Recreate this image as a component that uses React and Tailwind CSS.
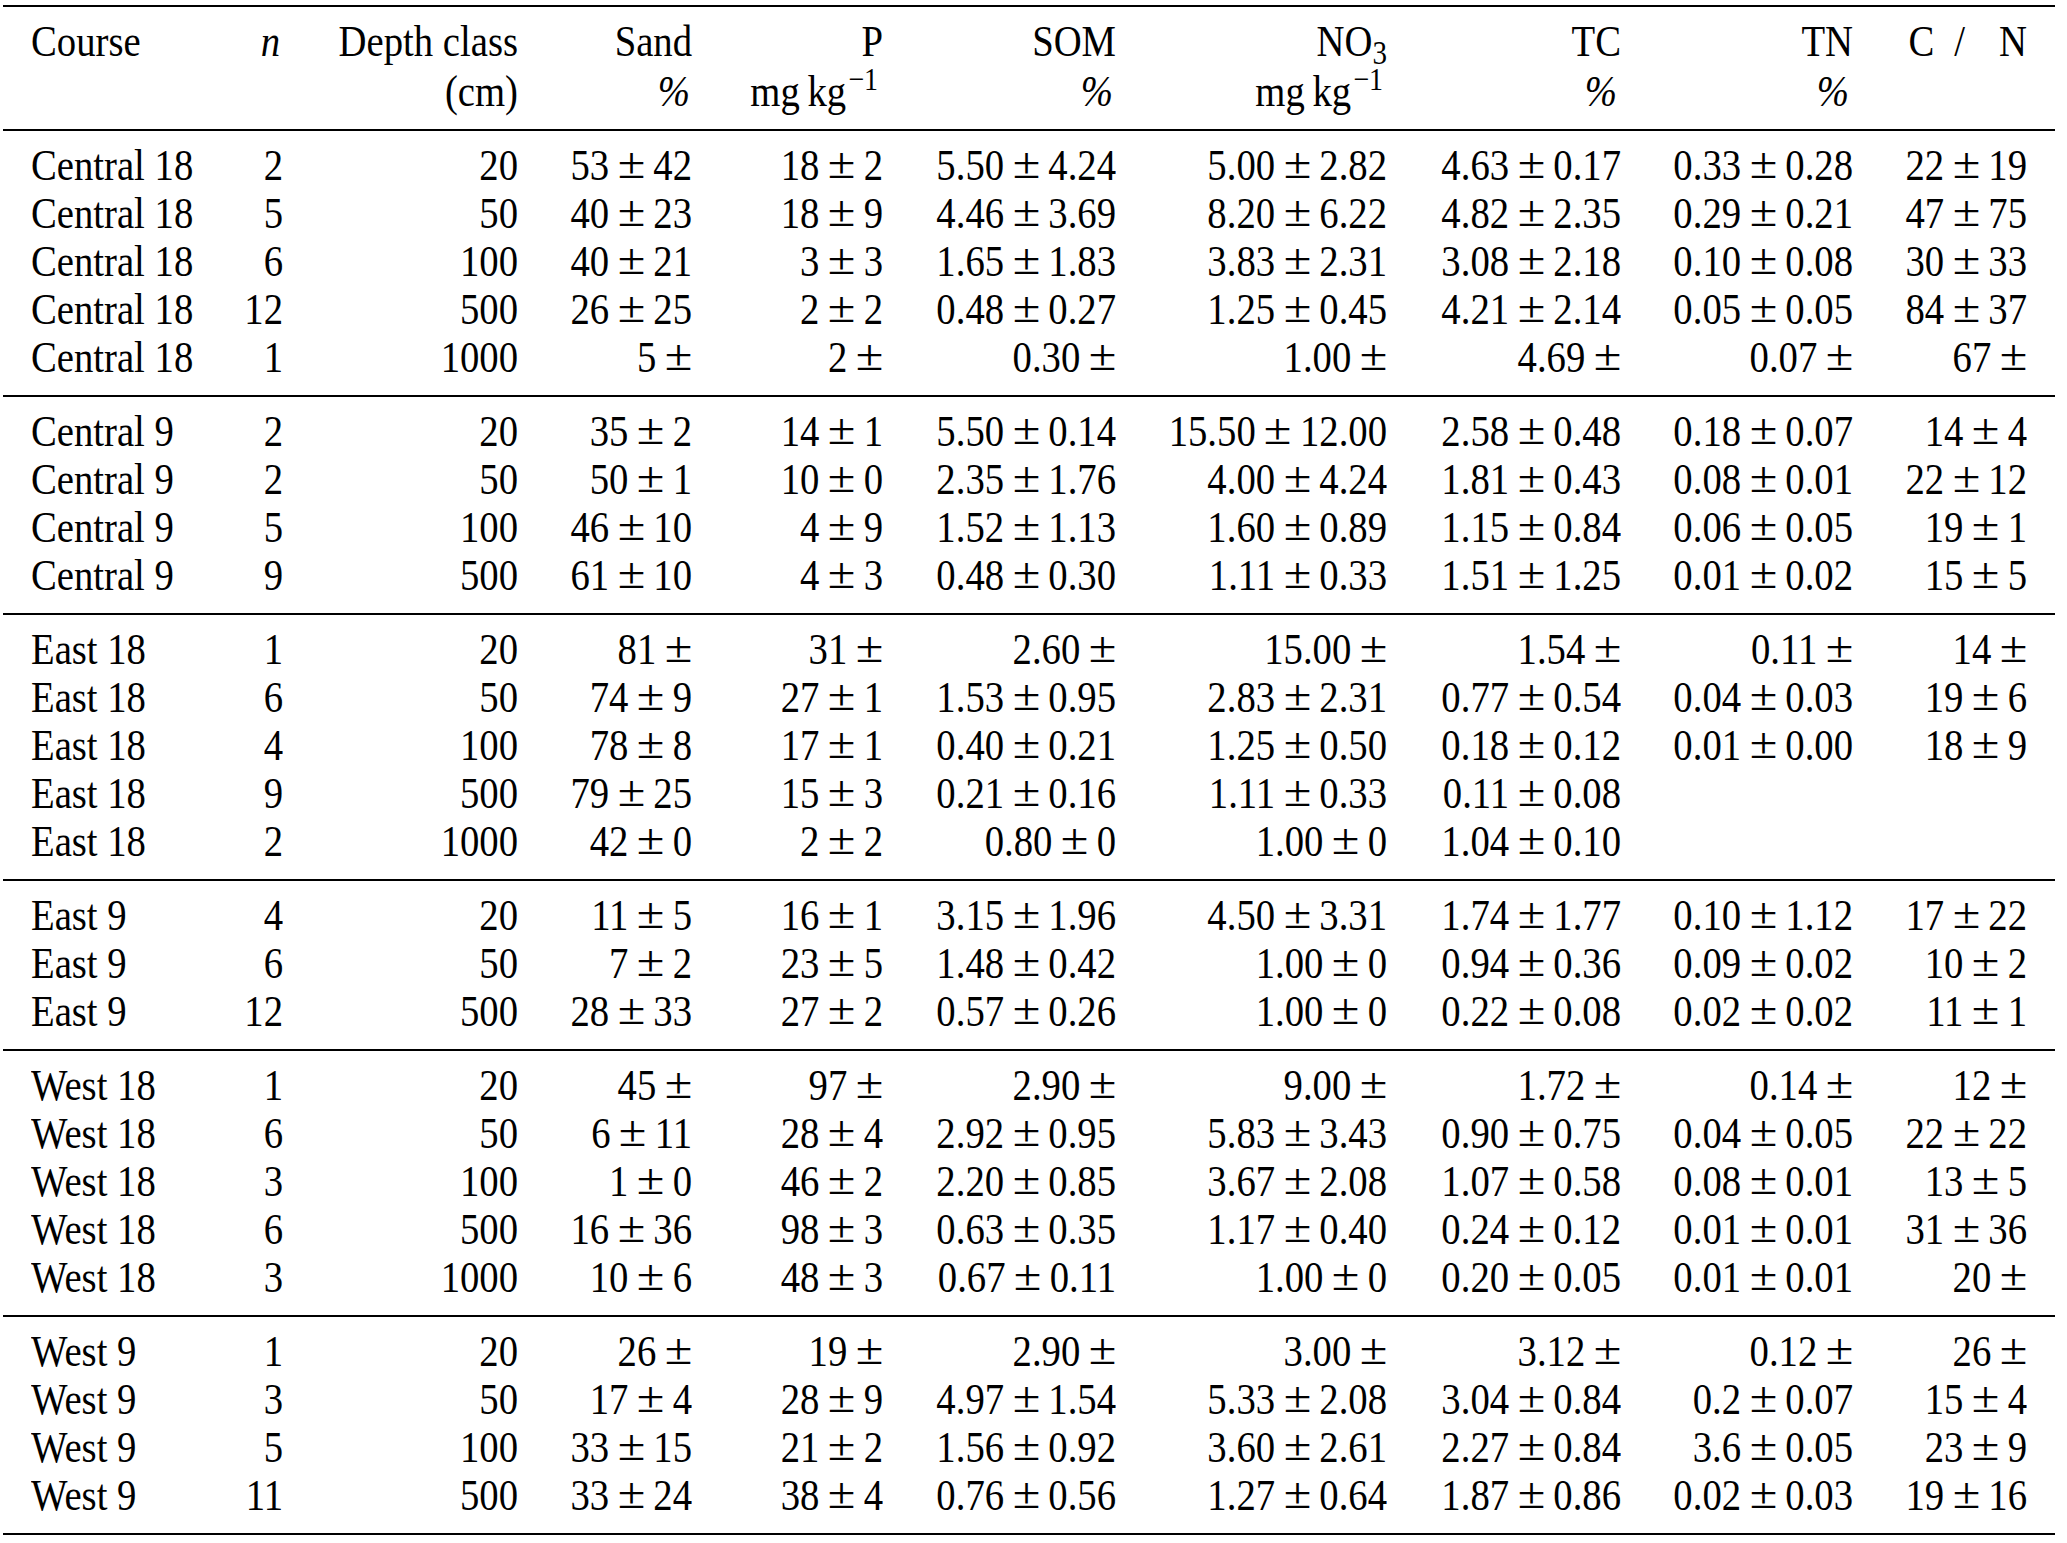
const groups = [
  [
    ['Central 18', '2', '20', '53 ± 42', '18 ± 2', '5.50 ± 4.24', '5.00 ± 2.82', '4.63 ± 0.17', '0.33 ± 0.28', '22 ± 19'],
    ['Central 18', '5', '50', '40 ± 23', '18 ± 9', '4.46 ± 3.69', '8.20 ± 6.22', '4.82 ± 2.35', '0.29 ± 0.21', '47 ± 75'],
    ['Central 18', '6', '100', '40 ± 21', '3 ± 3', '1.65 ± 1.83', '3.83 ± 2.31', '3.08 ± 2.18', '0.10 ± 0.08', '30 ± 33'],
    ['Central 18', '12', '500', '26 ± 25', '2 ± 2', '0.48 ± 0.27', '1.25 ± 0.45', '4.21 ± 2.14', '0.05 ± 0.05', '84 ± 37'],
    ['Central 18', '1', '1000', '5 ±', '2 ±', '0.30 ±', '1.00 ±', '4.69 ±', '0.07 ±', '67 ±'],
  ],
  [
    ['Central 9', '2', '20', '35 ± 2', '14 ± 1', '5.50 ± 0.14', '15.50 ± 12.00', '2.58 ± 0.48', '0.18 ± 0.07', '14 ± 4'],
    ['Central 9', '2', '50', '50 ± 1', '10 ± 0', '2.35 ± 1.76', '4.00 ± 4.24', '1.81 ± 0.43', '0.08 ± 0.01', '22 ± 12'],
    ['Central 9', '5', '100', '46 ± 10', '4 ± 9', '1.52 ± 1.13', '1.60 ± 0.89', '1.15 ± 0.84', '0.06 ± 0.05', '19 ± 1'],
    ['Central 9', '9', '500', '61 ± 10', '4 ± 3', '0.48 ± 0.30', '1.11 ± 0.33', '1.51 ± 1.25', '0.01 ± 0.02', '15 ± 5'],
  ],
  [
    ['East 18', '1', '20', '81 ±', '31 ±', '2.60 ±', '15.00 ±', '1.54 ±', '0.11 ±', '14 ±'],
    ['East 18', '6', '50', '74 ± 9', '27 ± 1', '1.53 ± 0.95', '2.83 ± 2.31', '0.77 ± 0.54', '0.04 ± 0.03', '19 ± 6'],
    ['East 18', '4', '100', '78 ± 8', '17 ± 1', '0.40 ± 0.21', '1.25 ± 0.50', '0.18 ± 0.12', '0.01 ± 0.00', '18 ± 9'],
    ['East 18', '9', '500', '79 ± 25', '15 ± 3', '0.21 ± 0.16', '1.11 ± 0.33', '0.11 ± 0.08', '', ''],
    ['East 18', '2', '1000', '42 ± 0', '2 ± 2', '0.80 ± 0', '1.00 ± 0', '1.04 ± 0.10', '', ''],
  ],
  [
    ['East 9', '4', '20', '11 ± 5', '16 ± 1', '3.15 ± 1.96', '4.50 ± 3.31', '1.74 ± 1.77', '0.10 ± 1.12', '17 ± 22'],
    ['East 9', '6', '50', '7 ± 2', '23 ± 5', '1.48 ± 0.42', '1.00 ± 0', '0.94 ± 0.36', '0.09 ± 0.02', '10 ± 2'],
    ['East 9', '12', '500', '28 ± 33', '27 ± 2', '0.57 ± 0.26', '1.00 ± 0', '0.22 ± 0.08', '0.02 ± 0.02', '11 ± 1'],
  ],
  [
    ['West 18', '1', '20', '45 ±', '97 ±', '2.90 ±', '9.00 ±', '1.72 ±', '0.14 ±', '12 ±'],
    ['West 18', '6', '50', '6 ± 11', '28 ± 4', '2.92 ± 0.95', '5.83 ± 3.43', '0.90 ± 0.75', '0.04 ± 0.05', '22 ± 22'],
    ['West 18', '3', '100', '1 ± 0', '46 ± 2', '2.20 ± 0.85', '3.67 ± 2.08', '1.07 ± 0.58', '0.08 ± 0.01', '13 ± 5'],
    ['West 18', '6', '500', '16 ± 36', '98 ± 3', '0.63 ± 0.35', '1.17 ± 0.40', '0.24 ± 0.12', '0.01 ± 0.01', '31 ± 36'],
    ['West 18', '3', '1000', '10 ± 6', '48 ± 3', '0.67 ± 0.11', '1.00 ± 0', '0.20 ± 0.05', '0.01 ± 0.01', '20 ±'],
  ],
  [
    ['West 9', '1', '20', '26 ±', '19 ±', '2.90 ±', '3.00 ±', '3.12 ±', '0.12 ±', '26 ±'],
    ['West 9', '3', '50', '17 ± 4', '28 ± 9', '4.97 ± 1.54', '5.33 ± 2.08', '3.04 ± 0.84', '0.2 ± 0.07', '15 ± 4'],
    ['West 9', '5', '100', '33 ± 15', '21 ± 2', '1.56 ± 0.92', '3.60 ± 2.61', '2.27 ± 0.84', '3.6 ± 0.05', '23 ± 9'],
    ['West 9', '11', '500', '33 ± 24', '38 ± 4', '0.76 ± 0.56', '1.27 ± 0.64', '1.87 ± 0.86', '0.02 ± 0.03', '19 ± 16'],
  ],
];

// column tracks: Course, n, Depth, Sand, P, SOM, NO3, TC, TN, C/N
const cols = 'grid grid-cols-[189px_63px_235px_174px_191px_233px_271px_234px_232px_174px]';

function Rule() {
  return <div className="h-[2px] bg-black" />;
}

// mean ± sd, the ± widened a bit like the math glyph
function Val({ v }) {
  if (!v.includes('±')) return v;
  const [a, b] = v.split('±').map((s) => s.trim());
  return (
    <>
      {a}
      <span className={`inline-block relative -top-[2px] scale-x-[1.3] ml-[11.5px] ${b ? 'mr-[11.5px]' : 'mr-[3px]'}`}>±</span>
      {b}
    </>
  );
}

function Row({ r }) {
  return (
    <div className={`${cols} h-[48px] leading-[48px]`}>
      {r.map((v, i) => (
        <div
          key={i}
          className={`${i === 0 ? 'text-left' : 'text-right'} scale-y-[1.15] whitespace-nowrap`}
        >
          <Val v={v} />
        </div>
      ))}
    </div>
  );
}

function Unit() {
  return (
    <span className="whitespace-nowrap">
      mg{'\u2009'}kg<sup className="ml-[2px] text-[28px]">−1</sup>
    </span>
  );
}

export default function App() {
  return (
    <div className="min-h-screen bg-white text-black font-['Liberation_Serif',serif] text-[38.7px]">
      <div className="ml-[3px] w-[2052px] pt-[5px]">
        <Rule />
        <div className="px-[28px] pt-[9px] pb-[13px]">
          <div className={`${cols} h-[50px] leading-[50px] scale-y-[1.15]`}>
            <div>Course</div>
            <div className="text-right italic pr-[3px]">n</div>
            <div className="text-right">Depth class</div>
            <div className="text-right">Sand</div>
            <div className="text-right">P</div>
            <div className="text-right">SOM</div>
            <div className="text-right">NO<sub>3</sub></div>
            <div className="text-right">TC</div>
            <div className="text-right">TN</div>
            <div className="text-right whitespace-nowrap">
              C<span className="ml-[20px] mr-[34px]">/</span>N
            </div>
          </div>
          <div className={`${cols} h-[50px] leading-[50px] scale-y-[1.15]`}>
            <div />
            <div />
            <div className="text-right">(cm)</div>
            <div className="text-right italic pr-[2px]">%</div>
            <div className="text-right pr-[5px]"><Unit /></div>
            <div className="text-right italic pr-[3px]">%</div>
            <div className="text-right pr-[4px]"><Unit /></div>
            <div className="text-right italic pr-[4px]">%</div>
            <div className="text-right italic pr-[4px]">%</div>
            <div />
          </div>
        </div>
        {groups.map((g, gi) => (
          <div key={gi}>
            <Rule />
            <div className="px-[28px] pt-[10px] pb-[14px]">
              {g.map((r, ri) => (
                <Row key={ri} r={r} />
              ))}
            </div>
          </div>
        ))}
        <Rule />
      </div>
    </div>
  );
}
